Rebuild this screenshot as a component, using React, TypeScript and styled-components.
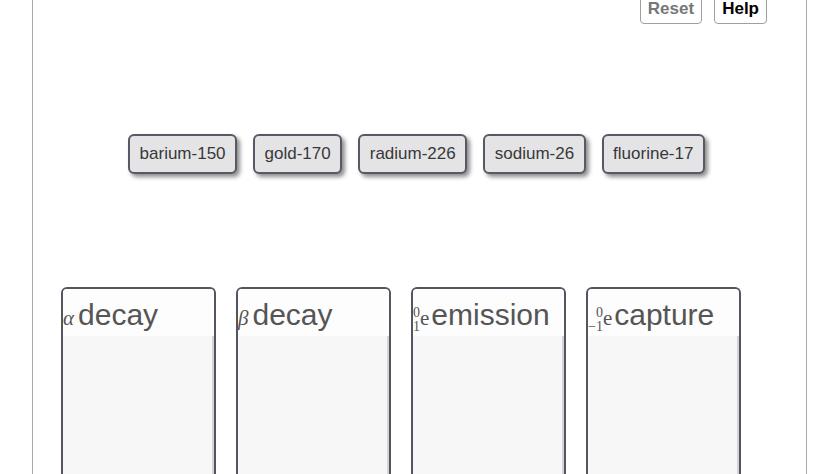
import React from 'react';
import styled, { createGlobalStyle } from 'styled-components';

const GlobalStyle = createGlobalStyle`
    html, body {
        margin: 0;
        padding: 0;
        overflow: hidden;
        background: #ffffff;
        font-family: "Liberation Sans", Arial, sans-serif;
    }
`;

const Page = styled.div`
    padding-left: 32px;
`;

const Frame = styled.div`
    box-sizing: border-box;
    width: 775px;
    height: 520px;
    margin-top: -8px;
    border-left: 1px solid #a8a8a8;
    border-right: 1px solid #a8a8a8;
`;

const Toolbar = styled.div`
    display: flex;
    justify-content: flex-end;
    gap: 12px;
    padding: 2px 39px 0 0;
`;

const ToolButton = styled.button<{ $disabled?: boolean }>`
    font-family: "Liberation Sans", Arial, sans-serif;
    font-size: 17px;
    font-weight: bold;
    line-height: 20px;
    padding: 4px 7px;
    border: 1px solid #a0a0a0;
    border-radius: 4px;
    background: #ffffff;
    color: ${(p) => (p.$disabled ? '#777777' : '#000000')};
`;

const ChipRow = styled.div`
    display: flex;
    justify-content: center;
    gap: 16px;
    margin-top: 110px;
    padding-right: 6px;
`;

const Chip = styled.div`
    box-sizing: border-box;
    height: 40px;
    padding: 0 9.5px;
    border: 2px solid #595966;
    border-radius: 6px;
    background: #e4e4e6;
    box-shadow: 3px 3px 4px rgba(0, 0, 0, 0.45);
    font-size: 17px;
    line-height: 35px;
    color: #383838;
    white-space: nowrap;
`;

const BinRow = styled.div`
    display: flex;
    gap: 20px;
    margin-top: 113px;
    padding-left: 28px;
`;

const Bin = styled.div`
    box-sizing: border-box;
    width: 155px;
    height: 220px;
    border: 2px solid #55555f;
    border-bottom: none;
    border-radius: 6px 6px 0 0;
    background: #f7f7f7;
    box-shadow: inset -2px 0 0 #d4d4d8;
    overflow: hidden;
`;

const BinHeader = styled.div`
    box-sizing: border-box;
    height: 47px;
    padding-top: 8px;
    background: #fdfdfd;
    font-size: 30px;
    line-height: 36px;
    color: #555555;
    white-space: nowrap;
`;

const Greek = styled.span`
    font-family: "Liberation Serif", "Times New Roman", serif;
    font-style: italic;
    font-size: 21px;
    margin-right: 4px;
`;

const Scripts = styled.span`
    display: inline-flex;
    flex-direction: column;
    align-items: flex-end;
    vertical-align: 8px;
    font-family: "Liberation Serif", "Times New Roman", serif;
    font-size: 14px;
    line-height: 14px;
`;

const Particle = styled.span`
    font-family: "Liberation Serif", "Times New Roman", serif;
    font-size: 21px;
    margin-right: 2px;
`;

const chips = ['barium-150', 'gold-170', 'radium-226', 'sodium-26', 'fluorine-17'];

function App() {
    return (
        <Page>
            <GlobalStyle />
            <Frame>
                <Toolbar>
                    <ToolButton $disabled>Reset</ToolButton>
                    <ToolButton>Help</ToolButton>
                </Toolbar>
                <ChipRow>
                    {chips.map((c) => (
                        <Chip key={c}>{c}</Chip>
                    ))}
                </ChipRow>
                <BinRow>
                    <Bin>
                        <BinHeader>
                            <Greek>α</Greek>decay
                        </BinHeader>
                    </Bin>
                    <Bin>
                        <BinHeader>
                            <Greek>β</Greek>decay
                        </BinHeader>
                    </Bin>
                    <Bin>
                        <BinHeader>
                            <Scripts>
                                <span>0</span>
                                <span>1</span>
                            </Scripts>
                            <Particle>e</Particle>emission
                        </BinHeader>
                    </Bin>
                    <Bin>
                        <BinHeader>
                            <Scripts>
                                <span>0</span>
                                <span>−1</span>
                            </Scripts>
                            <Particle>e</Particle>capture
                        </BinHeader>
                    </Bin>
                </BinRow>
            </Frame>
        </Page>
    );
}

export default App;
